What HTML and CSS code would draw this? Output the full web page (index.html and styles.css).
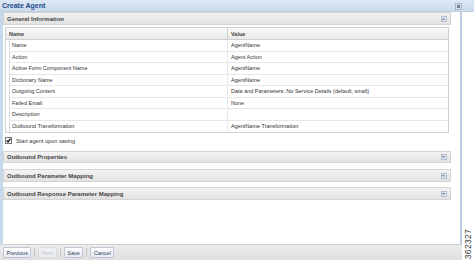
FILE: index.html
```html
<!DOCTYPE html>
<html>
<head>
<meta charset="utf-8">
<link rel="stylesheet" href="styles.css">
</head>
<body>
<div class="win">
  <div class="titlebar">
    <span class="title">Create Agent</span>
    <span class="close"><svg width="7" height="7" viewBox="0 0 7 7"><rect x="0.5" y="0.5" width="6" height="6" fill="#e9eef5" stroke="#a7b6c9"/><path d="M2 2 L5 5 M5 2 L2 5" stroke="#5a6b80" stroke-width="1.1"/></svg></span>
  </div>
  <div class="main">
    <div class="dialog">
      <div class="body">
        <div class="content">
          <div class="phead"><span>General Information</span><span class="tool"><svg width="6" height="6" viewBox="0 0 6 6"><path d="M1.5 4 L3 2 L4.5 4 Z" fill="#3a4a60"/></svg></span></div>
          <div class="grid">
            <div class="grow ghead"><div class="lead"></div><div class="c1">Name</div><div class="c2">Value</div></div>
            <div class="grow"><div class="lead"></div><div class="c1">Name</div><div class="c2">AgentName</div></div>
            <div class="grow"><div class="lead"></div><div class="c1">Action</div><div class="c2">Agent Action</div></div>
            <div class="grow"><div class="lead"></div><div class="c1">Active Form Component Name</div><div class="c2">AgentName</div></div>
            <div class="grow"><div class="lead"></div><div class="c1">Dictionary Name</div><div class="c2">AgentName</div></div>
            <div class="grow"><div class="lead"></div><div class="c1">Outgoing Content</div><div class="c2">Data and Parameters; No Service Details (default, small)</div></div>
            <div class="grow"><div class="lead"></div><div class="c1">Failed Email</div><div class="c2">None</div></div>
            <div class="grow"><div class="lead"></div><div class="c1">Description</div><div class="c2"></div></div>
            <div class="grow last"><div class="lead"></div><div class="c1">Outbound Transformation</div><div class="c2">AgentName Transformation</div></div>
          </div>
          <div class="chk">
            <svg width="7" height="7" viewBox="0 0 7 7"><rect x="0.5" y="0.5" width="6" height="6" fill="#fff" stroke="#7a7a7a"/><path d="M1.6 3.4 L3 5 L5.6 1.6" fill="none" stroke="#111" stroke-width="1.3"/></svg>
            <span>Start agent upon saving</span>
          </div>
          <div class="phead p1"><span>Outbound Properties</span><span class="tool"><svg width="6" height="6" viewBox="0 0 6 6"><path d="M1.5 2 L3 4 L4.5 2 Z" fill="#3a4a60"/></svg></span></div>
          <div class="phead p2"><span>Outbound Parameter Mapping</span><span class="tool"><svg width="6" height="6" viewBox="0 0 6 6"><path d="M1.5 2 L3 4 L4.5 2 Z" fill="#3a4a60"/></svg></span></div>
          <div class="phead p3"><span>Outbound Response Parameter Mapping</span><span class="tool"><svg width="6" height="6" viewBox="0 0 6 6"><path d="M1.5 2 L3 4 L4.5 2 Z" fill="#3a4a60"/></svg></span></div>
        </div>
        <div class="gutter"></div>
      </div>
      <div class="footer">
        <span class="btn">Previous</span>
        <span class="sep"></span>
        <span class="btn disabled">Next</span>
        <span class="sep"></span>
        <span class="btn">Save</span>
        <span class="sep"></span>
        <span class="btn">Cancel</span>
      </div>
    </div>
    <div class="fig"><span>362327</span></div>
  </div>
</div>
</body>
</html>
```

FILE: styles.css
```css
html, body {
  margin: 0;
  padding: 0;
  background: #fff;
}
body {
  width: 474px;
  height: 260px;
  overflow: hidden;
  font-family: "Liberation Sans", Arial, sans-serif;
  font-size: 5.5px;
  color: #333;
}
.win {
  display: flex;
  flex-direction: column;
  width: 474px;
  height: 260px;
}
.titlebar {
  height: 12px;
  box-sizing: border-box;
  display: flex;
  align-items: center;
  justify-content: space-between;
  padding: 0 12px 0 2px;
  background: linear-gradient(#dde8f5, #cbdbee);
  border-bottom: 1px solid #bccfe4;
}
.title {
  font-weight: bold;
  font-size: 7px;
  color: #1d4a8a;
}
.close {
  display: flex;
  margin-top: 1px;
}
.main {
  flex: 1;
  display: flex;
  min-height: 0;
}
.dialog {
  width: 462px;
  display: flex;
  flex-direction: column;
}
.body {
  flex: 1;
  display: flex;
  border-left: 3px solid #c9d9ec;
  border-right: 2px solid #bccde1;
  min-height: 0;
}
.content {
  width: 448px;
  display: flex;
  flex-direction: column;
}
.gutter {
  flex: 1;
  background: #fff;
}
.phead {
  height: 13px;
  box-sizing: border-box;
  display: flex;
  align-items: center;
  justify-content: space-between;
  padding: 0 3px 0 3px;
  background: linear-gradient(#f3f3f3, #e2e2e2);
  border: 1px solid #d4d4d4;
  font-weight: bold;
  font-size: 6px;
  color: #444;
}
.phead.p1 { margin-top: 6px; height: 12px; }
.phead.p2 { margin-top: 6px; }
.phead.p3 { margin-top: 5px; }
.tool {
  width: 6px;
  height: 6px;
  display: flex;
  background: #dfe5ee;
  border: 1px solid #b3c0d2;
  box-sizing: border-box;
  overflow: hidden;
}
.tool svg { margin: -1px 0 0 -1px; }
.grid {
  margin: 2px 2px 0 2px;
  border: 1px solid #d0d0d0;
  display: flex;
  flex-direction: column;
}
.grow {
  display: flex;
  height: 11.5px;
  box-sizing: border-box;
}
.grow .lead {
  width: 3px;
}
.grow .c1 {
  width: 218px;
  padding-left: 2px;
  display: flex;
  align-items: center;
  border-left: 1px solid #dcdcdc;
  border-bottom: 1px solid #e8e8e8;
  box-sizing: border-box;
}
.grow .c2 {
  flex: 1;
  padding-left: 3px;
  display: flex;
  align-items: center;
  border-bottom: 1px solid #e8e8e8;
  border-left: 1px solid #e8e8e8;
  box-sizing: border-box;
}
.grow.ghead {
  height: 12px;
  background: linear-gradient(#fafafa, #e9e9e9);
  border-bottom: 1px solid #d0d0d0;
  font-weight: bold;
  color: #444;
}
.grow.ghead .lead { display: none; }
.grow.ghead .c1 {
  width: 221px;
  border: none;
  padding-left: 3px;
}
.grow.ghead .c2 {
  border-bottom: none;
  border-left: 1px solid #d0d0d0;
}
.grow.last .c1, .grow.last .c2 { border-bottom: none; }
.chk {
  margin: 3px 0 0 2px;
  height: 9px;
  display: flex;
  align-items: center;
  gap: 4px;
  color: #333;
  font-size: 5.6px;
}
.footer {
  height: 16px;
  box-sizing: border-box;
  display: flex;
  align-items: center;
  gap: 3px;
  padding: 0 3px;
  background: linear-gradient(#ececec, #e0e0e0);
  border-top: 1px solid #cfcfcf;
}
.btn {
  height: 11px;
  box-sizing: border-box;
  display: flex;
  align-items: center;
  padding: 0 2.5px;
  border: 1px solid #bdc7d5;
  border-radius: 1px;
  background: linear-gradient(#ffffff, #e6eaf0);
  color: #2b3f5e;
  font-size: 5.5px;
}
.btn.disabled {
  color: #c4c8ce;
  border-color: #d8dce2;
  background: #eceef1;
}
.sep {
  width: 1px;
  height: 9px;
  background: #c8c8c8;
}
.fig {
  flex: 1;
  display: flex;
  flex-direction: column;
  justify-content: flex-end;
  align-items: center;
  padding-bottom: 1px;
}
.fig span {
  writing-mode: vertical-rl;
  transform: rotate(180deg);
  font-size: 8.5px;
  color: #333;
  letter-spacing: 0.3px;
}
```
